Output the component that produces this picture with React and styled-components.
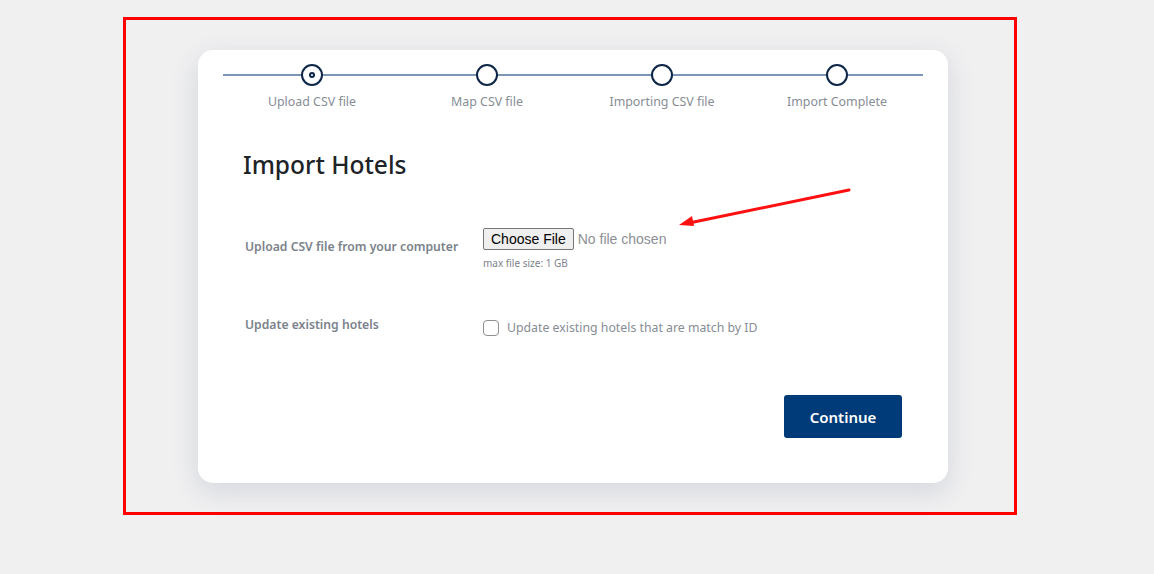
import React from 'react';
import styled, { createGlobalStyle } from 'styled-components';

const GlobalStyle = createGlobalStyle`
  body {
    margin: 0;
    background: #f0f0f1;
    font-family: "Noto Sans", "Open Sans", sans-serif;
  }
`;

const Page = styled.div`
  width: 1154px;
  height: 574px;
  padding: 17px 0 0 123px;
  box-sizing: border-box;
`;

const Frame = styled.div`
  position: relative;
  width: 894px;
  height: 498px;
  box-sizing: border-box;
  border: 3px solid #ff0000;
  padding: 30px 0 0 72px;
`;

const Card = styled.div`
  width: 750px;
  height: 433px;
  box-sizing: border-box;
  background: #fff;
  border-radius: 15px;
  box-shadow: 0 8px 28px rgba(40, 60, 100, 0.14);
  padding: 14px 25px 0;
`;

const Steps = styled.div`
  position: relative;
  display: grid;
  grid-template-columns: repeat(4, 1fr);

  &::before {
    content: '';
    position: absolute;
    left: 0;
    right: 0;
    top: 10px;
    height: 2px;
    background: #7b96b4;
  }
`;

const Step = styled.div`
  position: relative;
  display: flex;
  flex-direction: column;
  align-items: center;
  padding-left: 3px;
`;

const Dot = styled.div`
  width: 22px;
  height: 22px;
  box-sizing: border-box;
  border: 2px solid #0d2647;
  border-radius: 50%;
  background: #fff;
  display: flex;
  align-items: center;
  justify-content: center;

  &::after {
    content: '';
    display: ${p => (p.$active ? 'block' : 'none')};
    width: 6px;
    height: 6px;
    box-sizing: border-box;
    border: 2px solid #0d2647;
    border-radius: 50%;
  }
`;

const StepLabel = styled.div`
  margin-top: 7px;
  font-size: 12.4px;
  line-height: 18px;
  color: #878d95;
`;

const Body = styled.div`
  padding: 38px 21px 0 20px;
`;

const Title = styled.h1`
  margin: 0 0 47px;
  font-size: 24.5px;
  line-height: 32px;
  font-weight: 500;
  color: #1d2327;
`;

const Row = styled.div`
  display: grid;
  grid-template-columns: 240px 1fr;
  align-items: start;
  margin-bottom: ${p => p.$gap || 0}px;
`;

const Label = styled.div`
  padding-left: 2px;
  font-size: 12.2px;
  font-weight: 600;
  color: #7b828b;
  padding-top: ${p => p.$top || 0}px;
`;

const FileLine = styled.div`
  display: flex;
  align-items: center;
  gap: 4px;
  font-family: "Liberation Sans", Arial, sans-serif;
  font-size: 14px;
`;

const FileButton = styled.span`
  display: inline-block;
  padding: 2px 7px 1px;
  background: #efefef;
  border: 1px solid #767676;
  border-radius: 2px;
  color: #000;
  line-height: 17px;
`;

const FileName = styled.span`
  color: #8c9096;
`;

const Hint = styled.div`
  margin-top: 6px;
  font-size: 10px;
  color: #7d838b;
`;

const Check = styled.label`
  display: flex;
  align-items: center;
  gap: 8px;
  font-size: 12.3px;
  color: #878d95;
  padding-top: 3px;
`;

const Box = styled.span`
  width: 16px;
  height: 16px;
  box-sizing: border-box;
  border: 1px solid #8c8f94;
  border-radius: 4px;
  background: #fff;
`;

const Actions = styled.div`
  display: flex;
  justify-content: flex-end;
`;

const Button = styled.button`
  width: 118px;
  height: 43px;
  border: 0;
  border-radius: 3px;
  background: #003b79;
  color: #fff;
  font-family: "Noto Sans", sans-serif;
  font-size: 15px;
  font-weight: 600;
`;

const Arrow = styled.svg`
  position: absolute;
  left: 549px;
  top: 165px;
`;

const steps = ['Upload CSV file', 'Map CSV file', 'Importing CSV file', 'Import Complete'];

export default function App() {
  return (
    <Page>
      <GlobalStyle />
      <Frame>
        <Card>
          <Steps>
            {steps.map((s, i) => (
              <Step key={s}>
                <Dot $active={i === 0} />
                <StepLabel>{s}</StepLabel>
              </Step>
            ))}
          </Steps>
          <Body>
            <Title>Import Hotels</Title>
            <Row $gap={46}>
              <Label $top={10}>Upload CSV file from your computer</Label>
              <div>
                <FileLine>
                  <FileButton>Choose File</FileButton>
                  <FileName>No file chosen</FileName>
                </FileLine>
                <Hint>max file size: 1 GB</Hint>
              </div>
            </Row>
            <Row $gap={59}>
              <Label>Update existing hotels</Label>
              <Check>
                <Box />
                Update existing hotels that are match by ID
              </Check>
            </Row>
            <Actions>
              <Button>Continue</Button>
            </Actions>
          </Body>
        </Card>
        <Arrow width="180" height="45" viewBox="0 0 180 45">
          <line x1="174" y1="5" x2="14" y2="38" stroke="#ff1010" strokeWidth="3" strokeLinecap="round" />
          <polygon points="4,40 17,31 19,41" fill="#ff1010" />
        </Arrow>
      </Frame>
    </Page>
  );
}
